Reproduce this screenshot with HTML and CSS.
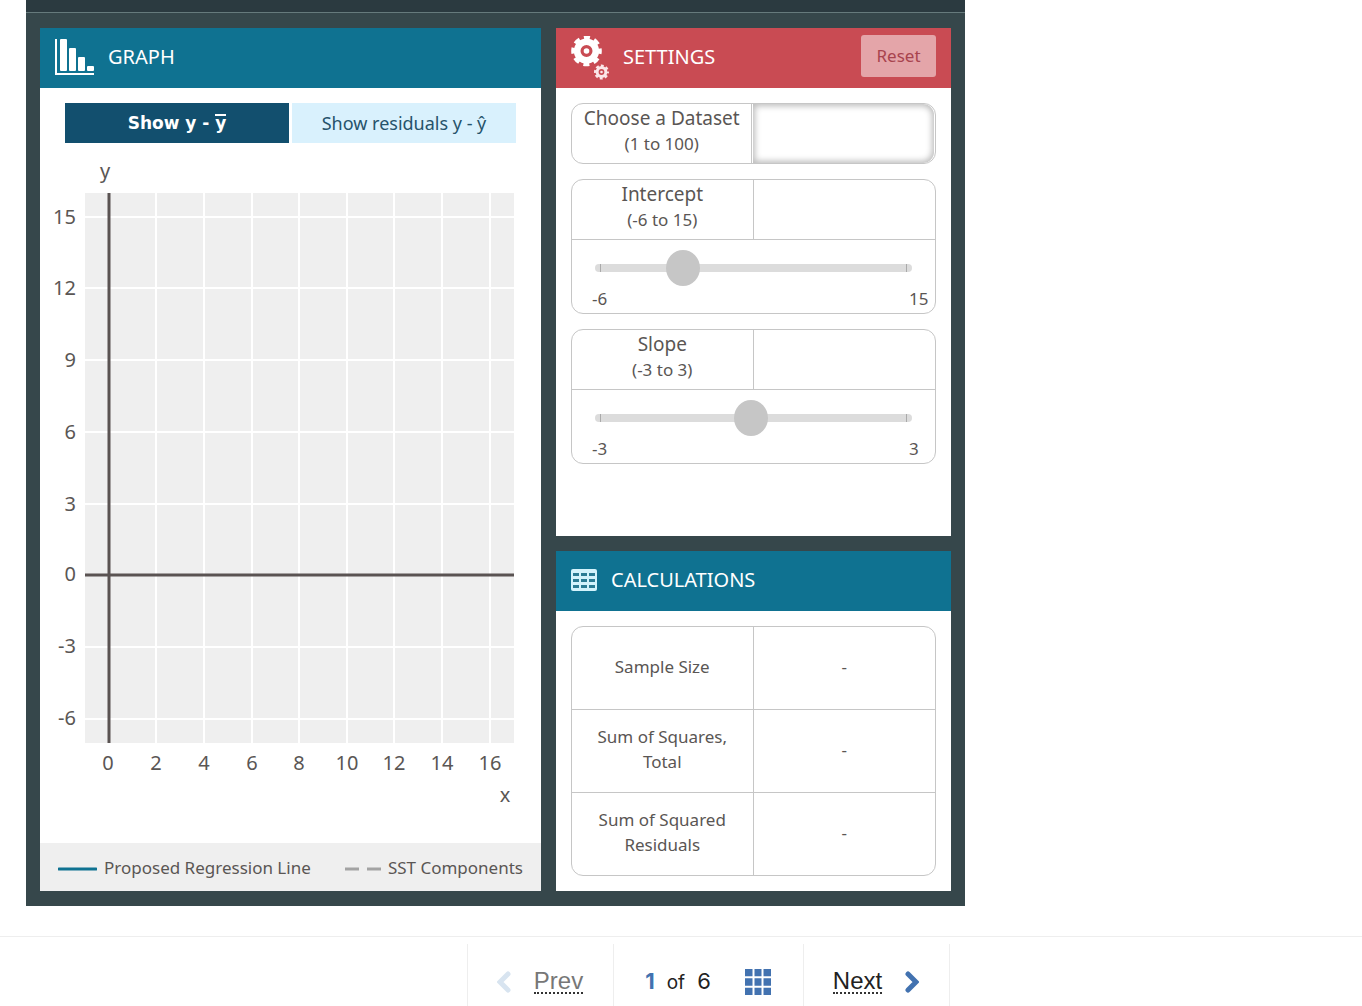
FILE: index.html
```html
<!DOCTYPE html>
<html lang="en">
<head>
    <meta charset="UTF-8">
    <meta name="viewport" content="width=device-width, initial-scale=1.0">
    <title>Regression Line</title>
    <link rel="stylesheet" href="styles.css">
</head>
<body>
    <main class="app">
        <div class="top-bar"></div>
        <div class="panels">
            <section class="panel graph">
                <header class="panel-header">
                    <svg width="39" height="36" viewBox="0 0 39 36" fill="#fff" aria-hidden="true">
                        <path d="M0 0h2v34h37v2H0z"/>
                        <rect x="5" y="0" width="7" height="32" rx="1"/>
                        <rect x="14" y="9" width="7" height="23" rx="1"/>
                        <rect x="23" y="18" width="7" height="14" rx="1"/>
                        <rect x="32" y="27" width="7" height="5" rx="1"/>
                    </svg>
                    <h2>GRAPH</h2>
                </header>
                <div class="tabs">
                    <button type="button" class="tab active">Show y - <span class="bar">y</span></button>
                    <button type="button" class="tab">Show residuals y - ŷ</button>
                </div>
                <svg class="chart" viewBox="0 0 501 700" role="img" aria-label="Scatter plot axes">
                    <rect x="45" y="50" width="429" height="550" fill="#efefef"/>
                    <g stroke="#fff" stroke-width="2">
                        <path d="M116 50v550M164 50v550M212 50v550M259 50v550M307 50v550M354 50v550M402 50v550M450 50v550"/>
                        <path d="M45 74h429M45 145h429M45 217h429M45 289h429M45 361h429M45 504h429M45 576h429"/>
                    </g>
                    <path d="M69 50v550M45 432h429" stroke="#5a5352" stroke-width="3"/>
                    <g class="y-labels">
                        <text x="36" y="81">15</text>
                        <text x="36" y="152">12</text>
                        <text x="36" y="224">9</text>
                        <text x="36" y="296">6</text>
                        <text x="36" y="368">3</text>
                        <text x="36" y="438">0</text>
                        <text x="36" y="510">-3</text>
                        <text x="36" y="582">-6</text>
                    </g>
                    <g class="x-labels">
                        <text x="68" y="627">0</text>
                        <text x="116" y="627">2</text>
                        <text x="164" y="627">4</text>
                        <text x="212" y="627">6</text>
                        <text x="259" y="627">8</text>
                        <text x="307" y="627">10</text>
                        <text x="354" y="627">12</text>
                        <text x="402" y="627">14</text>
                        <text x="450" y="627">16</text>
                        <text x="65" y="35">y</text>
                        <text x="465" y="659">x</text>
                    </g>
                </svg>
                <div class="legend">
                    <span class="legend-item">
                        <svg width="39" height="8" viewBox="0 0 39 8" aria-hidden="true"><path d="M1 6h37" stroke="#0f7291" stroke-width="3" stroke-linecap="round"/></svg>
                        Proposed Regression Line
                    </span>
                    <span class="legend-item">
                        <svg width="36" height="8" viewBox="0 0 36 8" aria-hidden="true"><path d="M0 6h14M22 6h14" stroke="#a3a3a3" stroke-width="3"/></svg>
                        SST Components
                    </span>
                </div>
            </section>

            <div class="side">
                <section class="panel settings">
                    <header class="panel-header red">
                        <svg width="38" height="44" viewBox="0 0 38 44" fill="none" stroke="#fff" aria-hidden="true">
                            <circle cx="15.5" cy="15" r="9.3" stroke-width="6.6"/>
                            <circle cx="15.5" cy="15" r="13" stroke-width="4.6" stroke-dasharray="5.8 4.41" stroke-dashoffset="2.9"/>
                            <circle cx="15.5" cy="15" r="2.8" fill="#fff" stroke="none"/>
                            <g stroke="#fbe6e8">
                                <circle cx="30.5" cy="36" r="4.4" stroke-width="3"/>
                                <circle cx="30.5" cy="36" r="6.2" stroke-width="2.6" stroke-dasharray="2.8 2.07" stroke-dashoffset="1.4"/>
                                <circle cx="30.5" cy="36" r="1.3" fill="#fbe6e8" stroke="none"/>
                            </g>
                        </svg>
                        <h2>SETTINGS</h2>
                        <button type="button" class="reset">Reset</button>
                    </header>
                    <div class="cards">
                        <div class="card">
                            <div class="field">
                                <label for="dataset">Choose a Dataset<small>(1 to 100)</small></label>
                                <input type="text" id="dataset" class="inset">
                            </div>
                        </div>
                        <div class="card">
                            <div class="field">
                                <label for="intercept">Intercept<small>(-6 to 15)</small></label>
                                <input type="text" id="intercept">
                            </div>
                            <div class="slider">
                                <input type="range" aria-label="Intercept" min="-6" max="15" step="0.1" value="-0.7">
                                <div class="ends"><span>-6</span><span>15</span></div>
                            </div>
                        </div>
                        <div class="card">
                            <div class="field">
                                <label for="slope">Slope<small>(-3 to 3)</small></label>
                                <input type="text" id="slope">
                            </div>
                            <div class="slider">
                                <input type="range" aria-label="Slope" min="-3" max="3" step="0.05" value="-0.05">
                                <div class="ends"><span>-3</span><span>3</span></div>
                            </div>
                        </div>
                    </div>
                </section>

                <section class="panel calculations">
                    <header class="panel-header">
                        <svg width="26" height="22" viewBox="0 0 26 22" aria-hidden="true">
                            <rect width="26" height="22" rx="2" fill="#d3f3fc"/>
                            <path d="M2 5.5h6M10 5.5h6M18 5.5h6M2 11.5h6M10 11.5h6M18 11.5h6M2 17.5h6M10 17.5h6M18 17.5h6" stroke="#2b7c94" stroke-width="3"/>
                        </svg>
                        <h2>CALCULATIONS</h2>
                    </header>
                    <table>
                        <tr><th scope="row">Sample Size</th><td>-</td></tr>
                        <tr><th scope="row">Sum of Squares, Total</th><td>-</td></tr>
                        <tr><th scope="row">Sum of Squared Residuals</th><td>-</td></tr>
                    </table>
                </section>
            </div>
        </div>
    </main>

    <nav class="pager">
        <div class="pager-cell">
            <svg width="14" height="22" viewBox="0 0 14 22" aria-hidden="true"><path d="M11 3L3 11l8 8" fill="none" stroke="#d8e4f0" stroke-width="5" stroke-linecap="round"/></svg>
            <a href="#" class="prev">Prev</a>
        </div>
        <div class="pager-cell pages">
            <span class="count"><b>1</b> <span class="of">of</span> <span>6</span></span>
            <a href="#" aria-label="All pages">
                <svg width="26" height="26" viewBox="0 0 26 26" aria-hidden="true"><path d="M0 3.5h26M0 13h26M0 22.5h26" stroke="#4272b0" stroke-width="7.5" stroke-dasharray="7.5 2 7 2 7.5 9"/></svg>
            </a>
        </div>
        <div class="pager-cell">
            <a href="#" class="next">Next</a>
            <svg width="14" height="22" viewBox="0 0 14 22" aria-hidden="true"><path d="M3 3l8 8-8 8" fill="none" stroke="#4272b0" stroke-width="5" stroke-linecap="round"/></svg>
        </div>
    </nav>
</body>
</html>
```

FILE: styles.css
```css
:root {
    --blue: #0f7291;
    --navy: #124f6e;
    --red: #c94b53;
    --frame: #36474b;
    --line: #c6c6c6;
    --text: #5a5654;
}

* {
    box-sizing: border-box;
}

body {
    margin: 0;
    background: #fff;
    color: var(--text);
    font-family: Tahoma, "Noto Sans", sans-serif;
    font-size: 17px;
}

.app {
    max-width: 939px;
    margin-left: 26px;
    background: var(--frame);
}

.top-bar {
    height: 13px;
    background: #2b3a40;
    border-bottom: 1px solid #667a7c;
}

.panels {
    display: flex;
    gap: 15px;
    padding: 15px 14px;
}

.panel {
    display: flex;
    flex-direction: column;
    background: #fff;
}

.graph {
    flex: 501;
}

.side {
    flex: 395;
    display: flex;
    flex-direction: column;
    gap: 15px;
}

.settings {
    flex: 1;
}

.panel-header {
    display: flex;
    align-items: center;
    gap: 14px;
    height: 60px;
    padding: 0 15px 2px;
    background: var(--blue);
    color: #fff;
}
.panel-header.red {
    padding-bottom: 0;
    background: var(--red);
}

h2 {
    margin: 0;
    font-size: 20px;
    line-height: 28px;
    font-weight: 400;
}
.red h2 {
    padding-bottom: 2px;
}

.reset {
    width: 75px;
    height: 42px;
    margin: 0 0 4px auto;
    padding: 0 0 2px;
    border: none;
    border-radius: 3px;
    background: #e4a5a9;
    color: #a8434e;
    font: inherit;
}

/* Graph */
.tabs {
    display: flex;
    gap: 3px;
    padding: 15px 25px 0;
}

.tab {
    flex: 1;
    height: 40px;
    padding: 0;
    border: none;
    background: #d9f1fd;
    color: #26536b;
    font: inherit;
    font-size: 18px;
}
.tab.active {
    background: var(--navy);
    color: #fff;
    font-family: "DejaVu Sans", sans-serif;
    font-size: 17px;
    font-weight: 700;
}

.bar {
    display: inline-block;
    border-top: 2px solid;
    line-height: 15px;
}

.chart {
    display: block;
    width: 100%;
    fill: var(--text);
    font-size: 20px;
}

.y-labels {
    text-anchor: end;
}

.x-labels {
    text-anchor: middle;
}

.legend {
    display: flex;
    align-items: center;
    justify-content: space-between;
    height: 48px;
    padding: 0 18px;
    margin-top: auto;
    background: #efefef;
}

.legend-item {
    display: flex;
    align-items: center;
    gap: 7px;
}

/* Settings */
.cards {
    display: flex;
    flex-direction: column;
    gap: 15px;
    padding: 15px;
}

.card {
    border: 1px solid var(--line);
    border-radius: 12px;
    overflow: hidden;
}

.field {
    display: flex;
    height: 59px;
}

.field label {
    width: 50%;
    border-right: 1px solid var(--line);
    text-align: center;
    font-size: 19px;
    line-height: 28px;
}

.field small {
    display: block;
    font-size: 17px;
    line-height: 24px;
}

.field input {
    width: 50%;
    padding: 0 12px;
    border: none;
    background: none;
    color: inherit;
    font: inherit;
    outline: none;
}
.field input.inset {
    margin: 0 1px;
    border-radius: 0 11px 11px 0;
    box-shadow: inset 0 0 6px 2px #bbb;
}

.slider {
    height: 74px;
    padding: 10px 6px 0 20px;
    border-top: 1px solid var(--line);
}

.slider input {
    display: block;
    width: calc(100% - 20px);
    height: 36px;
    margin: 0 0 0 3px;
    -webkit-appearance: none;
    appearance: none;
    background: none;
}
.slider input::-webkit-slider-runnable-track {
    height: 8px;
    border-radius: 4px;
    background:
        linear-gradient(#aaa, #aaa) 5px 0 / 1px 8px no-repeat,
        linear-gradient(#aaa, #aaa) calc(100% - 5px) 0 / 1px 8px no-repeat,
        #dcdcdc;
}
.slider input::-webkit-slider-thumb {
    -webkit-appearance: none;
    width: 34px;
    height: 36px;
    margin-top: -14px;
    border-radius: 50%;
    background: #c6c6c6;
}

.ends {
    display: flex;
    justify-content: space-between;
    line-height: 26px;
}
.ends span:last-child {
    width: 20px;
}

/* Calculations */
table {
    margin: 15px;
    border: 1px solid var(--line);
    border-radius: 12px;
    border-spacing: 0;
    table-layout: fixed;
}

th,
td {
    width: 50%;
    height: 83px;
    padding: 0 20px 4px;
    border-top: 1px solid var(--line);
    font-weight: 400;
    line-height: 25px;
    text-align: center;
}
th {
    border-right: 1px solid var(--line);
}
tr:first-child > * {
    height: 82px;
    border-top: none;
}

/* Pager */
.pager {
    display: flex;
    justify-content: center;
    margin-top: 30px;
    padding: 7px 0 0 54px;
    border-top: 1px solid #eee;
}

.pager-cell {
    display: flex;
    align-items: center;
    justify-content: center;
    gap: 23px;
    width: 146px;
    height: 62px;
    padding-top: 14px;
    border-left: 1px solid #eee;
}
.pager-cell:last-child {
    width: 147px;
    border-right: 1px solid #eee;
}
.pager-cell.pages {
    width: 190px;
    gap: 34px;
}

.pager-cell a {
    display: block;
    color: #222;
    font-family: "Liberation Sans", Arial, sans-serif;
    font-size: 24px;
    line-height: 22px;
    text-decoration: none;
}
.pager-cell a svg {
    display: block;
}
.pager-cell .prev,
.pager-cell .next {
    border-bottom: 2px dotted #333;
}
.pager-cell .prev {
    color: #777;
}

.count {
    display: flex;
    align-items: baseline;
    gap: 12px;
    padding-bottom: 2px;
    color: #222;
    font-family: Inter, sans-serif;
    font-size: 22px;
}
.count b {
    color: #4272b0;
}
.of {
    font-size: 19px;
}
```
